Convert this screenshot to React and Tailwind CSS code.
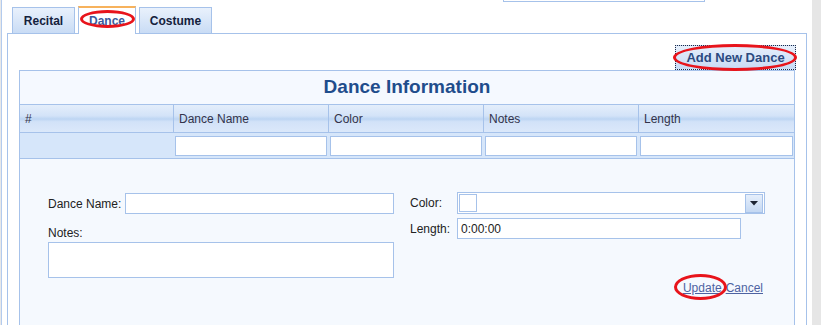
import React from 'react'

const font = { fontFamily: '"Liberation Sans", Arial, sans-serif' }

const Tab = ({ label, active, width }) => {
  if (active) {
    return (
      <div className="relative z-10 -mb-px flex h-[28px] w-[58px] items-center justify-center border-x border-t-2 border-x-[#a6c2ea] border-t-[#f7b25c] bg-white text-[12px] font-bold text-[#3a5a9c]">
        {label}
      </div>
    )
  }
  return (
    <div
      className={`relative z-10 -mb-px flex h-[27px] items-center justify-center border border-[#a6c2ea] bg-[linear-gradient(#e9f1fc,#c9dcf5)] text-[12px] font-bold text-[#14213d] ${width}`}
    >
      {label}
    </div>
  )
}

const columns = ['#', 'Dance Name', 'Color', 'Notes', 'Length']

const DanceTable = () => (
  <div className="border border-[#a6c2ea]">
    <div className="flex h-[34px] items-center justify-center border-b border-[#a6c2ea] bg-[#f5f9ff] text-[19px] font-bold text-[#1f4d8c]">
      Dance Information
    </div>
    <div className="grid h-[28px] grid-cols-[153px_155px_155px_155px_1fr] border-b border-[#a6c2ea] bg-[linear-gradient(#e4eefb_0%,#d3e3f8_40%,#bdd5f3_52%,#d2e2f8_62%,#dbe8fa_100%)]">
      {columns.map((c, i) => (
        <div
          key={c}
          className={`flex items-center px-[5px] text-[12px] text-[#33334a] ${i > 0 ? 'border-l border-[#a6c2ea]' : ''}`}
        >
          {c}
        </div>
      ))}
    </div>
    <div className="grid h-[26px] grid-cols-[153px_155px_155px_155px_1fr] border-b border-[#a6c2ea] bg-[#d6e6fa]">
      {columns.map((c, i) => (
        <div key={c} className="flex items-center pl-[2px] pr-[1px]">
          {i > 0 && <div className="h-[20px] w-full border border-[#a6c2ea] bg-white" />}
        </div>
      ))}
    </div>
    <DanceForm />
  </div>
)

const DanceForm = () => (
  <div className="flex h-[200px] gap-[16px] bg-[#f5f9fe] pl-[28px] pt-[33px] text-[12px] text-[#222]">
    <div className="w-[346px] pt-[1px]">
      <div className="flex items-center">
        <span className="w-[77px]">Dance Name:</span>
        <div className="h-[21px] flex-1 border border-[#a6c2ea] bg-white" />
      </div>
      <div className="mt-[11px] leading-[16px]">Notes:</div>
      <div className="mt-[1px] h-[36px] border border-[#a6c2ea] bg-white" />
    </div>
    <div className="w-[355px]">
      <div className="flex items-center">
        <span className="w-[47px]">Color:</span>
        <div className="flex h-[22px] flex-1 items-center justify-between border border-[#a6c2ea] bg-white px-[1px]">
          <div className="h-[18px] w-[18px] border border-[#a6c2ea] bg-white" />
          <div className="flex h-[19px] w-[18px] items-center justify-center border border-[#a6c2ea] bg-[linear-gradient(#e6effb,#c4d8f3)]">
            <svg width="8" height="5" viewBox="0 0 8 5">
              <path d="M0 0h8L4 4.5z" fill="#1c2433" />
            </svg>
          </div>
        </div>
      </div>
      <div className="mt-[4px] flex items-center">
        <span className="w-[47px]">Length:</span>
        <div className="flex h-[21px] w-[284px] items-center border border-[#a6c2ea] bg-white px-[3px]">
          0:00:00
        </div>
      </div>
      <div className="mt-[41px] flex justify-end pr-[2px] leading-[16px] text-[#4e63a2]">
        <a className="underline">Update</a>
        <a className="ml-[4px] underline">Cancel</a>
      </div>
    </div>
  </div>
)

const Ring = ({ className }) => (
  <div className={`pointer-events-none absolute z-20 rounded-[50%] border-[3px] border-[#e8141b] ${className}`} />
)

export default function App() {
  return (
    <div className="relative flex h-[325px] w-[821px] overflow-hidden bg-white" style={font}>
      <div className="flex w-[7px] shrink-0">
        <div className="w-[1px] bg-[#e8e8e8]" />
        <div className="w-[1px] bg-[#b3cbee]" />
      </div>
      <div className="flex w-[800px] shrink-0 flex-col">
        <div className="flex h-[33px] shrink-0">
          <div className="flex items-end gap-[3px] pl-[5px]">
            <Tab label="Recital" width="w-[63px]" />
            <Tab label="Dance" active />
            <Tab label="Costume" width="w-[73px]" />
          </div>
          <div className="ml-[291px] h-[2px] w-[202px] border-x border-b border-[#a6c2ea]" />
        </div>
        <div className="shrink-0 border border-[#a6c2ea] bg-white px-[11px] pt-[11px]">
          <div className="-mr-px flex justify-end">
            <button className="flex h-[25px] w-[121px] items-center justify-center border border-dotted border-[#1d2b48] bg-[linear-gradient(#e6effb,#c8dbf5)] text-[13px] font-bold text-[#2b4a80]">
              Add New Dance
            </button>
          </div>
          <DanceTable />
        </div>
      </div>
      <div className="w-[5px] shrink-0" />
      <div className="w-[9px] shrink-0 bg-[#e6e6e6]" />
      <Ring className="left-[80px] top-[10px] h-[18px] w-[55px]" />
      <Ring className="left-[673px] top-[44px] h-[27px] w-[124px]" />
      <Ring className="left-[674px] top-[274px] h-[26px] w-[53px]" />
    </div>
  )
}
